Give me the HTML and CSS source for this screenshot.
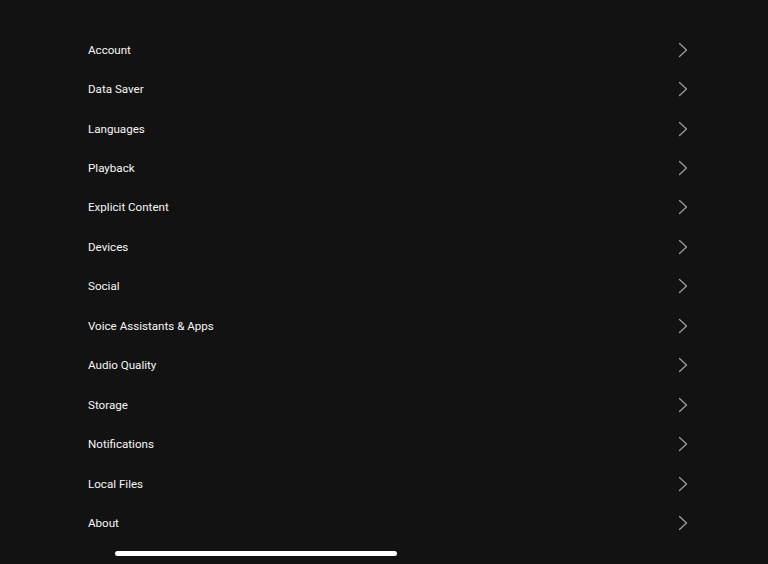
FILE: index.html
```html
<!DOCTYPE html>
<html>
<head>
<meta charset="utf-8">
<link rel="stylesheet" href="styles.css">
</head>
<body>
<div class="screen">
  <ul class="list">
    <li class="row"><span class="label">Account</span><svg class="chev" viewBox="0 0 10 16" width="10" height="16"><polyline points="1.5,1.5 8.5,8 1.5,14.5"/></svg></li>
    <li class="row"><span class="label">Data Saver</span><svg class="chev" viewBox="0 0 10 16" width="10" height="16"><polyline points="1.5,1.5 8.5,8 1.5,14.5"/></svg></li>
    <li class="row"><span class="label">Languages</span><svg class="chev" viewBox="0 0 10 16" width="10" height="16"><polyline points="1.5,1.5 8.5,8 1.5,14.5"/></svg></li>
    <li class="row"><span class="label">Playback</span><svg class="chev" viewBox="0 0 10 16" width="10" height="16"><polyline points="1.5,1.5 8.5,8 1.5,14.5"/></svg></li>
    <li class="row"><span class="label">Explicit Content</span><svg class="chev" viewBox="0 0 10 16" width="10" height="16"><polyline points="1.5,1.5 8.5,8 1.5,14.5"/></svg></li>
    <li class="row"><span class="label">Devices</span><svg class="chev" viewBox="0 0 10 16" width="10" height="16"><polyline points="1.5,1.5 8.5,8 1.5,14.5"/></svg></li>
    <li class="row"><span class="label">Social</span><svg class="chev" viewBox="0 0 10 16" width="10" height="16"><polyline points="1.5,1.5 8.5,8 1.5,14.5"/></svg></li>
    <li class="row"><span class="label">Voice Assistants &amp; Apps</span><svg class="chev" viewBox="0 0 10 16" width="10" height="16"><polyline points="1.5,1.5 8.5,8 1.5,14.5"/></svg></li>
    <li class="row"><span class="label">Audio Quality</span><svg class="chev" viewBox="0 0 10 16" width="10" height="16"><polyline points="1.5,1.5 8.5,8 1.5,14.5"/></svg></li>
    <li class="row"><span class="label">Storage</span><svg class="chev" viewBox="0 0 10 16" width="10" height="16"><polyline points="1.5,1.5 8.5,8 1.5,14.5"/></svg></li>
    <li class="row"><span class="label">Notifications</span><svg class="chev" viewBox="0 0 10 16" width="10" height="16"><polyline points="1.5,1.5 8.5,8 1.5,14.5"/></svg></li>
    <li class="row"><span class="label">Local Files</span><svg class="chev" viewBox="0 0 10 16" width="10" height="16"><polyline points="1.5,1.5 8.5,8 1.5,14.5"/></svg></li>
    <li class="row"><span class="label">About</span><svg class="chev" viewBox="0 0 10 16" width="10" height="16"><polyline points="1.5,1.5 8.5,8 1.5,14.5"/></svg></li>
  </ul>
  <div class="home-bar"></div>
</div>
</body>
</html>
```
FILE: styles.css
```css
html, body {
  margin: 0;
  padding: 0;
  background: #121212;
}
.screen {
  width: 768px;
  height: 564px;
  background: #121212;
  display: flex;
  flex-direction: column;
  font-family: "Roboto", "Liberation Sans", sans-serif;
  overflow: hidden;
}
.list {
  list-style: none;
  margin: 0;
  padding: 30px 80px 0 88px;
}
.row {
  height: 39.45px;
  display: flex;
  align-items: center;
  justify-content: space-between;
}
.label {
  color: #f6f6f6;
  font-size: 11.6px;
  font-weight: 400;
}
.chev {
  fill: none;
  stroke: #9a9a9a;
  stroke-width: 1.3;
  stroke-linecap: round;
  stroke-linejoin: round;
}
.home-bar {
  margin: auto 0 8px 115px;
  width: 282px;
  height: 5px;
  border-radius: 3px;
  background: #ffffff;
}
```
